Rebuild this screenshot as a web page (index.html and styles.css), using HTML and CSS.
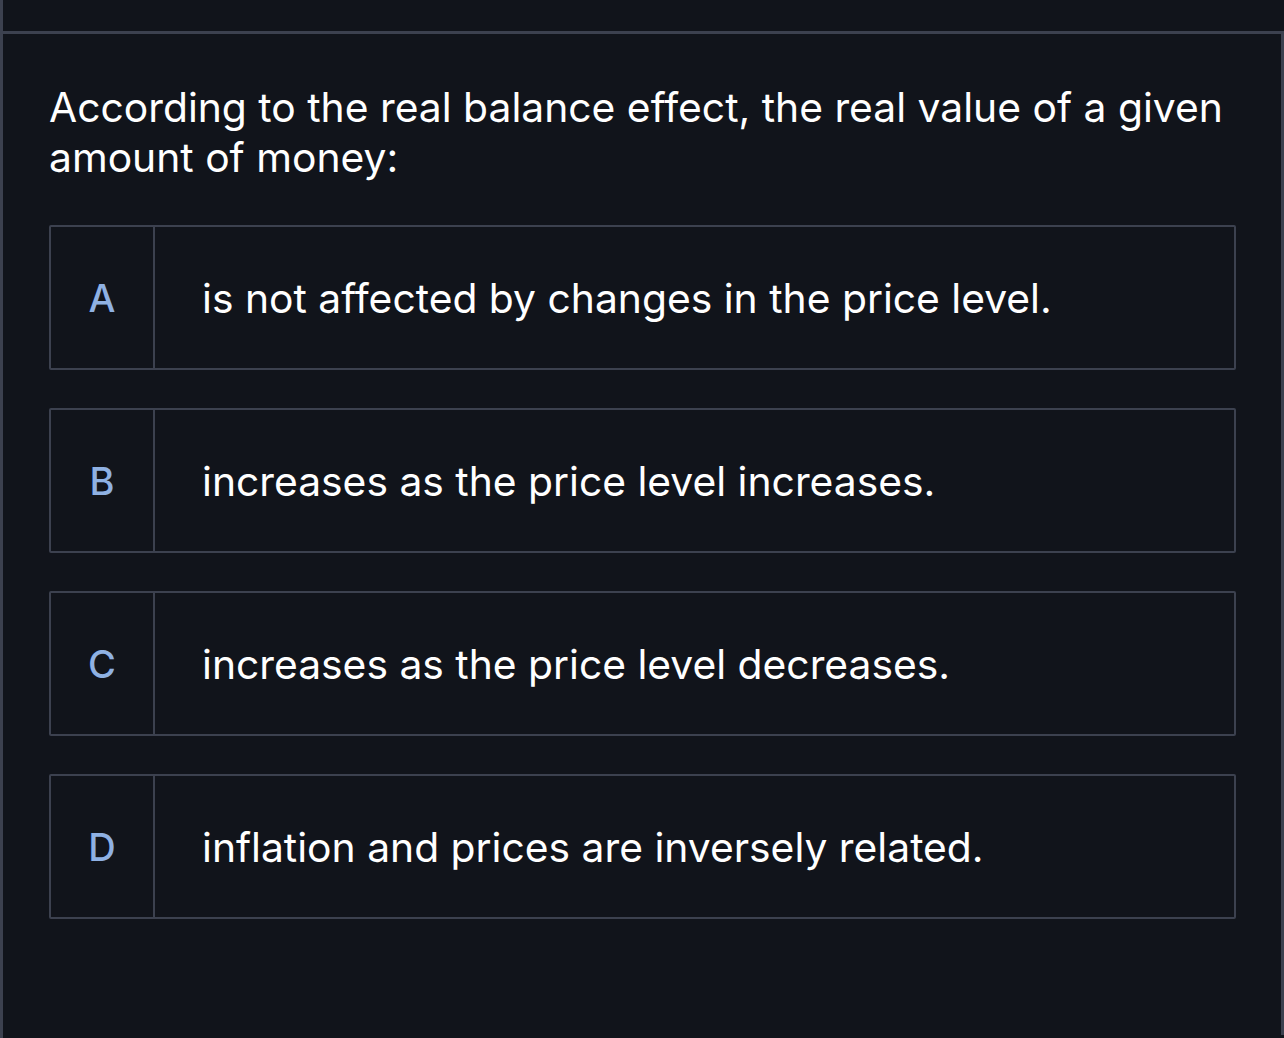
FILE: index.html
```html
<!DOCTYPE html>
<html>
<head>
<meta charset="utf-8">
<link rel="stylesheet" href="styles.css">
</head>
<body>
<div class="frame">
  <div class="topbar"></div>
  <div class="card">
    <p class="question">According to the real balance effect, the real value of a given amount of money:</p>
    <div class="options">
      <div class="option"><div class="letter">A</div><div class="text">is not affected by changes in the price level.</div></div>
      <div class="option"><div class="letter">B</div><div class="text">increases as the price level increases.</div></div>
      <div class="option"><div class="letter">C</div><div class="text">increases as the price level decreases.</div></div>
      <div class="option"><div class="letter">D</div><div class="text">inflation and prices are inversely related.</div></div>
    </div>
  </div>
</div>
</body>
</html>
```

FILE: styles.css
```css
html, body {
  margin: 0;
  padding: 0;
  background: #11141b;
  height: 100%;
  overflow: hidden;
}
body {
  font-family: Inter, "Noto Sans", sans-serif;
  color: #ffffff;
}
.frame {
  height: 1038px;
  border-left: 3px solid #3c414f;
  box-sizing: border-box;
}
.topbar {
  height: 31px;
}
.card {
  border-top: 3px solid #3c414f;
  border-right: 3px solid #3c414f;
  height: 1004px;
  box-sizing: border-box;
  padding: 48px 46px 0 46px;
}
.question {
  margin: 0;
  font-size: 40.8px;
  line-height: 50px;
  font-weight: 400;
}
.options {
  margin-top: 43px;
  display: flex;
  flex-direction: column;
  gap: 38px;
  width: 1187px;
}
.option {
  display: flex;
  height: 145px;
  border: 2px solid #3c414f;
  border-radius: 2px;
  box-sizing: border-box;
}
.letter {
  width: 102px;
  flex: none;
  border-right: 2px solid #3c414f;
  display: flex;
  align-items: center;
  justify-content: center;
  color: #8fb1e3;
  font-size: 38px;
  font-weight: 500;
}
.text {
  display: flex;
  align-items: center;
  padding-left: 47px;
  font-size: 40.8px;
}
```
